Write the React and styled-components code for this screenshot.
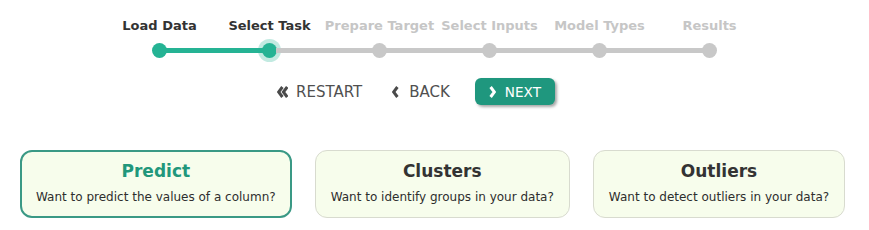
import styled, { createGlobalStyle } from 'styled-components';

const GlobalStyle = createGlobalStyle`
  body {
    margin: 0;
    background: #fff;
    font-family: "DejaVu Sans", Verdana, sans-serif;
  }
`

const Page = styled.div`
  width: 869px;
  height: 230px;
  overflow: hidden;
`

const Stepper = styled.div`
  width: 660px;
  margin: 0 auto;
  padding-top: 18px;
`

const Labels = styled.div`
  display: grid;
  grid-template-columns: repeat(6, 110px);
`

const Label = styled.div`
  text-align: center;
  white-space: nowrap;
  font-size: 13px;
  line-height: 16px;
  font-weight: bold;
  color: ${p => (p.$pending ? '#c6c6c6' : '#333')};
`

const Track = styled.div`
  display: flex;
  align-items: center;
  height: 15px;
  margin: 9px 47.5px 0;
`

const Dot = styled.div`
  width: 15px;
  height: 15px;
  border-radius: 50%;
  flex: none;
  background: ${p => (p.$done ? '#25b394' : '#c8c8c8')};
  box-shadow: ${p => (p.$active ? '0 0 0 4px rgba(37,179,148,0.28)' : 'none')};
`

const Segment = styled.div`
  flex: 1;
  height: 5px;
  margin: 0 -1px;
  background: ${p => (p.$done ? '#25b394' : '#c8c8c8')};
`

const Nav = styled.div`
  display: flex;
  justify-content: center;
  align-items: center;
  margin-top: 20px;
  padding-right: 37px;
  height: 27px;
`

const LinkButton = styled.button`
  display: inline-flex;
  align-items: center;
  gap: ${p => p.$gap || 8}px;
  margin-right: ${p => p.$space || 0}px;
  padding: 0;
  border: none;
  background: none;
  font-family: inherit;
  font-size: 15px;
  color: #505050;
  cursor: pointer;
`

const NextButton = styled.button`
  display: inline-flex;
  align-items: center;
  gap: 9px;
  height: 27px;
  padding: 0 14px;
  border: none;
  border-radius: 6px;
  background: #1f977e;
  color: #fff;
  font-family: inherit;
  font-size: 13.6px;
  box-shadow: 2px 2px 3px rgba(0, 0, 0, 0.35);
  cursor: pointer;
`

const Icon = styled.svg`
  flex: none;
  display: block;
`

const Cards = styled.div`
  display: flex;
  gap: 23px;
  margin-top: 45px;
  padding-left: 20px;
`

const Card = styled.div`
  box-sizing: border-box;
  text-align: center;
  height: 68px;
  border-radius: 12px;
  background: #f7fdec;
  border: ${p => (p.$selected ? '2px solid #3a9985' : '1px solid #d8dbcf')};
  padding: ${p => (p.$selected ? '9px 14px 0' : '10px 15px 0')};
  cursor: pointer;
`

const CardTitle = styled.div`
  font-size: 17px;
  line-height: 20px;
  font-weight: bold;
  color: ${p => (p.$selected ? '#21977b' : '#333')};
`

const CardText = styled.div`
  margin-top: 9px;
  font-size: 12px;
  line-height: 15px;
  color: #2e2e2e;
  white-space: nowrap;
`

const steps = ['Load Data', 'Select Task', 'Prepare Target', 'Select Inputs', 'Model Types', 'Results']
const current = 1

const tasks = [
  { title: 'Predict', text: 'Want to predict the values of a column?' },
  { title: 'Clusters', text: 'Want to identify groups in your data?' },
  { title: 'Outliers', text: 'Want to detect outliers in your data?' },
]

// heavy angle bracket(s), like the "angle" glyphs of an icon font
const Chevron = ({ dir = 'left', double, color, w }) => {
  const one = (x0) =>
    dir === 'left'
      ? `M${x0 + 5.4} 1 L${x0 + 1.6} 6 L${x0 + 5.4} 11`
      : `M${x0 + 1.6} 1 L${x0 + 5.4} 6 L${x0 + 1.6} 11`
  const d = double ? one(0) + ' ' + one(4.8) : one((w - 7) / 2)
  return (
    <Icon width={w} height={12} viewBox={`0 0 ${w} 12`}>
      <path d={d} fill="none" stroke={color} strokeWidth="3" />
    </Icon>
  )
}

const App = () => {
  return (
    <Page>
      <GlobalStyle />
      <Stepper>
        <Labels>
          {steps.map((s, i) => (
            <Label key={s} $pending={i > current}>{s}</Label>
          ))}
        </Labels>
        <Track>
          {steps.map((s, i) => (
            <>
              {i > 0 && <Segment key={s + '-seg'} $done={i <= current} />}
              <Dot key={s} $done={i <= current} $active={i === current} />
            </>
          ))}
        </Track>
      </Stepper>
      <Nav>
        <LinkButton $gap={8} $space={30}>
          <Chevron double color="#4a4a4a" w={11} />
          RESTART
        </LinkButton>
        <LinkButton $gap={10} $space={25}>
          <Chevron color="#4a4a4a" w={7} />
          BACK
        </LinkButton>
        <NextButton>
          <Chevron dir="right" color="#fff" w={7} />
          NEXT
        </NextButton>
      </Nav>
      <Cards>
        {tasks.map((t, i) => (
          <Card key={t.title} $selected={i === 0}>
            <CardTitle $selected={i === 0}>{t.title}</CardTitle>
            <CardText>{t.text}</CardText>
          </Card>
        ))}
      </Cards>
    </Page>
  );
}

export default App;
